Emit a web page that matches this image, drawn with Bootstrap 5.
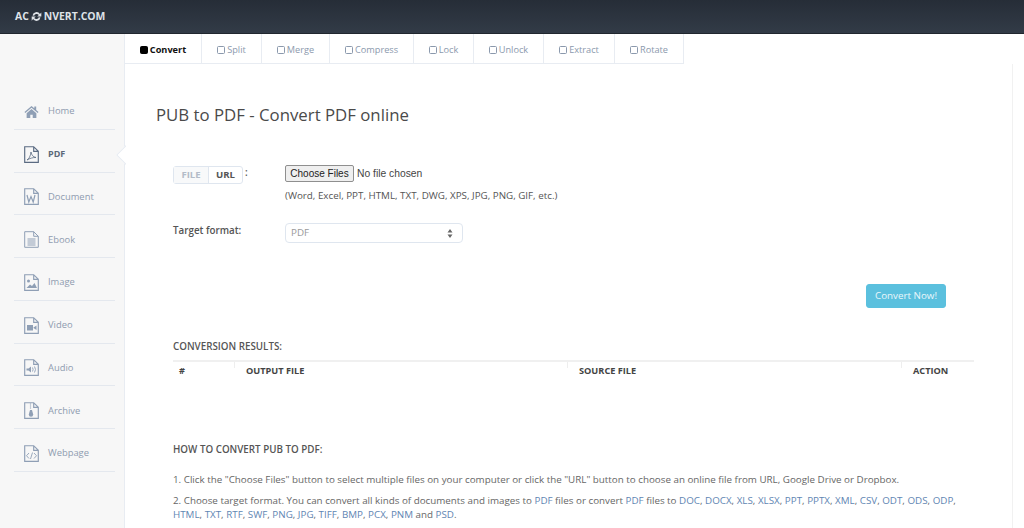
<!DOCTYPE html>
<html lang="en">
<head>
<meta charset="utf-8">
<title>PUB to PDF - Convert PDF online</title>
<link href="https://cdn.jsdelivr.net/npm/bootstrap@5.3.0/dist/css/bootstrap.min.css" rel="stylesheet">
<style>
html,body{height:528px;overflow:hidden}
body{font-family:"Open Sans",sans-serif;font-size:9.8px;color:#555;background:#fff}
a{color:#5f86b3;text-decoration:none}
.topbar{height:34px;background:linear-gradient(#262d37,#323b47);padding-left:15px;color:#dfe3e8;font-weight:700;font-size:10.4px;border-bottom:1px solid #20262e}
.topbar svg{width:11px;height:11px;margin:0 2px}
.shell{height:494px}
.sidenav{width:125px;flex:none;background:#f7f7f7;border-right:1px solid #e8ecf2;padding:53px 9px 0 14px;position:relative}
.sidenav a{height:42.75px;border-bottom:1px solid #e4e8ee;color:#8f9cb0;font-size:9.4px;font-weight:400;padding:7px 0 0 10px;gap:9px}
.sidenav a.on{color:#5c6879;font-weight:700;font-size:9px}
.sidenav svg{width:15px;height:17px;flex:none;color:#8f9fb5;stroke-width:1.15}
.sidenav a.on svg{color:#5b6b82}
.notch{position:absolute;left:116px;top:111px;width:10px;height:20px;overflow:hidden}
.notch::before{content:"";position:absolute;left:3px;top:3px;width:14px;height:14px;background:#fff;border:1px solid #e8ecf2;transform:rotate(45deg)}
.tabbar{height:30px;border-bottom:1px solid #e8ecf2;width:559px}
.tabbar a{height:29px;border-right:1px solid #e8ecf2;color:#8b99ad;font-size:9.2px;gap:2px;justify-content:center;padding-top:2px}
.tabbar a.on{color:#111;font-weight:700}
.tick{width:8px;height:8px;border:1px solid #8b99ad;border-radius:1.5px;display:inline-block}
.on .tick{background:#000;border-color:#000}
.page{width:888px;height:464px;border-right:1px solid #f1f1f1}
.pagehead{font-size:16.8px;font-weight:400;color:#4a4a4a;margin:0;padding:40px 0 0 31px;line-height:22px}
.formzone{padding:33px 38px 0 48px}
.lbl{width:112px;flex:none;font-weight:600;color:#555;font-size:9.8px}
.switcher{width:70px;height:18px;border:1px solid #dfe6ef;border-radius:3px;font-size:9.6px;font-weight:700;margin-right:2px}
.switcher span{line-height:16px;text-align:center}
.switcher .off{width:35px;color:#b3bcc8;background:#f8f9fa;border-right:1px solid #dfe6ef}
.switcher .cur{width:33px;color:#555}
.headrow{padding-top:6px}
.swcell{padding-top:1px}
.picker{font-family:"Liberation Sans",sans-serif;font-size:10.3px;color:#444;width:220px;display:block}
.picker::file-selector-button{font-family:"Liberation Sans",sans-serif;font-size:10px;height:17px;padding:0;margin-right:3px;border:1px solid #8f8f8f;border-radius:2px;background:#efefef;color:#222;width:69px}
.hint{margin:6px 0 0;line-height:15px;color:#555;font-size:9.8px}
.fmtrow{margin-top:20px}
.fmtlbl{padding-top:1px}
.fmt{width:178px;height:20px;border:1px solid #dfe6ef;border-radius:4px;font-size:9.8px;color:#999;background:#fff url("data:image/svg+xml,%3Csvg xmlns='http://www.w3.org/2000/svg' width='6' height='9'%3E%3Cpath d='M3 0l2.5 3.4h-5zM3 9L.5 5.6h5z' fill='%23666'/%3E%3C/svg%3E") no-repeat 161px 5px;padding-left:5px;appearance:none;display:block;outline:0}
.gobtn{--bs-btn-bg:#5bc0de;--bs-btn-border-color:#5bc0de;--bs-btn-color:#eaf7fb;font-size:9.8px;width:80px;height:24px;padding:0;border-radius:3px;margin-top:41px}
.reshead{font-weight:600;color:#555;font-size:9.8px;margin:32px 0 0;line-height:14px}
.restable{width:801px;margin:6px 0 0;border-top:2px solid #f0f0f0;table-layout:fixed;border-collapse:collapse}
.restable th{font-size:9.2px;font-weight:700;color:#444;padding:3px 0 0 12px;height:20px;line-height:11px;vertical-align:top;position:relative;border:0;text-transform:uppercase}
.restable th+th::before{content:"";position:absolute;left:0;top:0;height:6px;border-left:1px solid #eee}
.howto{margin:62px 0 0;font-weight:600;font-size:9.8px;color:#555;line-height:14px}
.step{margin:0;font-size:9.8px;line-height:14px;color:#666}
.stepone{margin-top:16px}
.steptwo{margin-top:7px}
</style>
</head>
<body>
<header class="topbar d-flex align-items-center">AC<svg viewBox="0 0 16 16"><path d="M2.2 6.5A6 6 0 0 1 13 4.2L15 2v6H9l2.3-2.2A3.8 3.8 0 0 0 4.6 7zM13.8 9.5A6 6 0 0 1 3 11.8L1 14V8h6L4.7 10.2A3.8 3.8 0 0 0 11.4 9z" fill="currentColor"/></svg>NVERT.COM</header>
<div class="shell d-flex">
<nav class="sidenav">
<a class="d-flex align-items-center" href="#"><svg viewBox="0 0 16 16"><path d="M8 2 0.5 8.6l.9 1L8 4l6.600 5.600.9-1L13 6.400V2.600h-2v2zM2.800 9.900V15h3.900v-3.600h2.600V15h3.900V9.900L8 5.400z" fill="currentColor" stroke="none"/></svg>Home</a>
<a class="d-flex align-items-center on" href="#"><svg viewBox="0 0 15 17" fill="none" stroke="currentColor"><path d="M.7.700h9l4.600 4.600v11H.7zM9.700.7v4.600h4.600"/><path d="M3 14c2-1 3.500-4 4-8 .5 3 2 5 5 5.500-3-.2-6.500 1-9 2.500z" stroke-width=".8"/></svg>PDF</a>
<a class="d-flex align-items-center" href="#"><svg viewBox="0 0 15 17" fill="none" stroke="currentColor"><path d="M.7.700h9l4.600 4.600v11H.7zM9.700.7v4.600h4.600"/><path d="M3 7l1.800 7L7 8.500 9.200 14 11 7" stroke-width="1.200"/></svg>Document</a>
<a class="d-flex align-items-center" href="#"><svg viewBox="0 0 15 17" fill="none" stroke="currentColor"><path d="M.7.700h9l4.600 4.600v11H.7zM9.700.7v4.600h4.600M3.500 8h8M3.500 10h8M3.500 12h8M3.500 14h8" stroke-width="1"/></svg>Ebook</a>
<a class="d-flex align-items-center" href="#"><svg viewBox="0 0 15 17" fill="none" stroke="currentColor"><path d="M.7.700h9l4.600 4.600v11H.7zM9.700.7v4.600h4.600"/><circle cx="4.500" cy="7" r="1.500" fill="currentColor" stroke="none"/><path d="M2.500 14l3.500-3.500 2 1.500 2.500-3 2.500 5z" fill="currentColor" stroke="none"/></svg>Image</a>
<a class="d-flex align-items-center" href="#"><svg viewBox="0 0 15 17" fill="none" stroke="currentColor"><path d="M.7.700h9l4.600 4.600v11H.7zM9.700.7v4.600h4.600"/><path d="M3 8h6v5.500H3zM9.500 10.500l3-2v4.500l-3-2z" fill="currentColor" stroke="none"/></svg>Video</a>
<a class="d-flex align-items-center" href="#"><svg viewBox="0 0 15 17" fill="none" stroke="currentColor"><path d="M.7.700h9l4.600 4.600v11H.7zM9.700.7v4.600h4.600"/><path d="M2.500 9.500h2l2.500-2v6l-2.500-2h-2z" fill="currentColor" stroke="none"/><path d="M8.500 8.500q1.200 2 0 4M10.500 7.500q2 3 0 6" stroke-width=".9"/></svg>Audio</a>
<a class="d-flex align-items-center" href="#"><svg viewBox="0 0 15 17" fill="none" stroke="currentColor"><path d="M.7.700h9l4.600 4.600v11H.7zM9.700.7v4.600h4.600"/><path d="M6.500 1.500v6" stroke-dasharray="1 1"/><path d="M6 8h2l1.200 4.500a2.200 2.200 0 1 1-4.400 0z" fill="currentColor" stroke="none"/></svg>Archive</a>
<a class="d-flex align-items-center" href="#"><svg viewBox="0 0 15 17" fill="none" stroke="currentColor"><path d="M.7.700h9l4.600 4.600v11H.7zM9.700.7v4.600h4.600"/><path d="M5 8l-2.500 2.700L5 13.500M10 8l2.500 2.700L10 13.500M8.500 7.500l-2 6.500" stroke-width=".9"/></svg>Webpage</a>
<span class="notch"></span>
</nav>
<div class="flex-grow-1">
<div class="tabbar d-flex">
<a class="d-flex align-items-center on" style="width:77px" href="#"><i class="tick"></i>Convert</a>
<a class="d-flex align-items-center" style="width:60px" href="#"><i class="tick"></i>Split</a>
<a class="d-flex align-items-center" style="width:68px" href="#"><i class="tick"></i>Merge</a>
<a class="d-flex align-items-center" style="width:84px" href="#"><i class="tick"></i>Compress</a>
<a class="d-flex align-items-center" style="width:60px" href="#"><i class="tick"></i>Lock</a>
<a class="d-flex align-items-center" style="width:70px" href="#"><i class="tick"></i>Unlock</a>
<a class="d-flex align-items-center" style="width:71px" href="#"><i class="tick"></i>Extract</a>
<a class="d-flex align-items-center" style="width:69px" href="#"><i class="tick"></i>Rotate</a>
</div>
<main class="page">
<h1 class="pagehead">PUB to PDF - Convert PDF online</h1>
<div class="formzone">
<div class="d-flex headrow">
<div class="lbl d-flex align-items-start swcell"><span class="switcher d-flex"><span class="off">FILE</span><span class="cur">URL</span></span>:</div>
<div>
<input class="picker" type="file" multiple>
<p class="hint">(Word, Excel, PPT, HTML, TXT, DWG, XPS, JPG, PNG, GIF, etc.)</p>
</div>
</div>
<div class="d-flex fmtrow">
<div class="lbl fmtlbl">Target format:</div>
<select class="fmt"><option>PDF</option></select>
</div>
<div class="d-flex justify-content-end" style="width:773px"><button class="btn gobtn" type="button">Convert Now!</button></div>
<h2 class="reshead">CONVERSION RESULTS:</h2>
<table class="restable">
<colgroup><col style="width:61px"><col style="width:333px"><col style="width:334px"><col></colgroup>
<thead><tr><th style="padding-left:6px">#</th><th>Output file</th><th>Source file</th><th>Action</th></tr></thead>
</table>
<h2 class="howto">HOW TO CONVERT PUB TO PDF:</h2>
<p class="step stepone">1. Click the "Choose Files" button to select multiple files on your computer or click the "URL" button to choose an online file from URL, Google Drive or Dropbox.</p>
<p class="step steptwo">2. Choose target format. You can convert all kinds of documents and images to <a href="#">PDF</a> files or convert <a href="#">PDF</a> files to <a href="#">DOC</a>, <a href="#">DOCX</a>, <a href="#">XLS</a>, <a href="#">XLSX</a>, <a href="#">PPT</a>, <a href="#">PPTX</a>, <a href="#">XML</a>, <a href="#">CSV</a>, <a href="#">ODT</a>, <a href="#">ODS</a>, <a href="#">ODP</a>, <a href="#">HTML</a>, <a href="#">TXT</a>, <a href="#">RTF</a>, <a href="#">SWF</a>, <a href="#">PNG</a>, <a href="#">JPG</a>, <a href="#">TIFF</a>, <a href="#">BMP</a>, <a href="#">PCX</a>, <a href="#">PNM</a> and <a href="#">PSD</a>.</p>
</div>
</main>
</div>
</div>
<script src="https://cdn.jsdelivr.net/npm/bootstrap@5.3.0/dist/js/bootstrap.bundle.min.js"></script>
</body>
</html>
